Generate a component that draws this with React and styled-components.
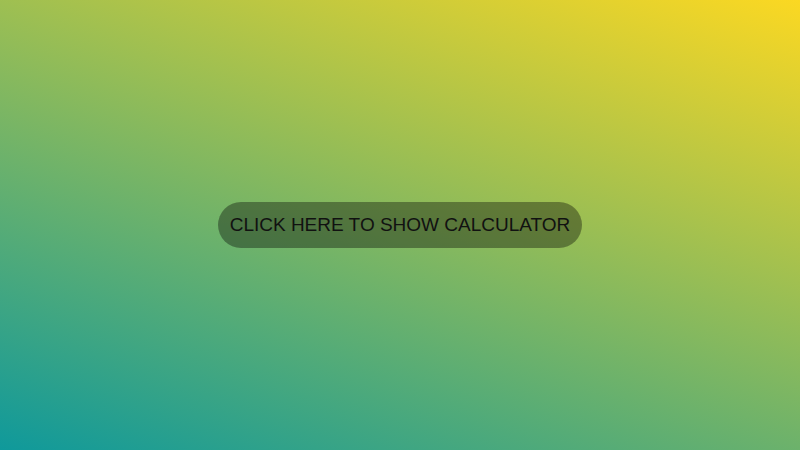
import React from 'react';
import styled, { createGlobalStyle } from 'styled-components';

const GlobalStyle = createGlobalStyle`
  html, body, #root {
    margin: 0;
    height: 100%;
  }
  body {
    font-family: "Liberation Sans", Arial, sans-serif;
  }
`;

const Page = styled.div`
  height: 100vh;
  display: flex;
  align-items: center;
  justify-content: center;
  background: linear-gradient(20deg, #0f999b 0%, #fbd822 100%);
`;

const ShowButton = styled.button`
  height: 46px;
  padding: 0 12px;
  border: none;
  border-radius: 23px;
  background-color: rgba(0, 0, 0, 0.36);
  color: #111;
  font-family: "Liberation Sans", Arial, sans-serif;
  font-size: 19px;
  text-transform: uppercase;
  cursor: pointer;
`;

const App = () => {
  return (
    <>
      <GlobalStyle />
      <Page>
        <ShowButton>Click here to show calculator</ShowButton>
      </Page>
    </>
  );
};

export default App;
